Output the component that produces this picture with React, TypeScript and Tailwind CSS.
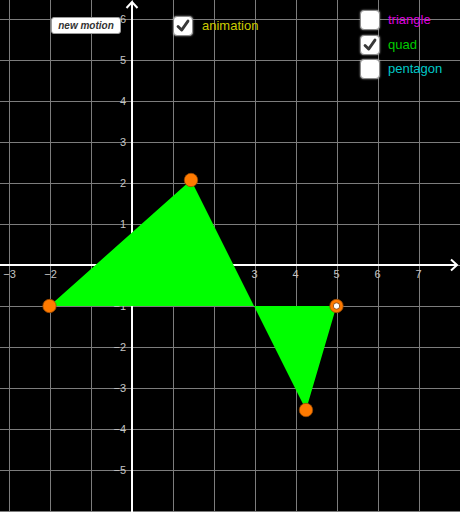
import React from "react";

const OX = 131.5;
const OY = 265;
const U = 41;
const px = (x: number) => OX + x * U;
const py = (y: number) => OY - y * U;

function Check({ checked }: { checked: boolean }) {
  return (
    <div className="w-[20px] h-[20px] shrink-0 rounded-[4px] bg-white border border-[#8a8a8a] shadow-[0_0_2px_rgba(255,255,255,0.6)]">
      {checked && (
        <svg viewBox="0 0 20 20" className="w-full h-full">
          <path d="M4.5 10.5 L8.5 14.5 L15.5 4.5" fill="none" stroke="#383838" strokeWidth="3.2" strokeLinecap="round" strokeLinejoin="round" />
        </svg>
      )}
    </div>
  );
}

function CheckRow({ checked, label, color }: { checked: boolean; label: string; color: string }) {
  return (
    <div className="flex items-center gap-[8px] h-[20px]">
      <Check checked={checked} />
      <span className={`text-[13px] leading-[16px] ${color}`}>{label}</span>
    </div>
  );
}

export default function App() {
  const xs: number[] = [];
  for (let k = -3; k <= 8; k++) xs.push(px(k));
  const ys: number[] = [];
  for (let k = -6; k <= 6; k++) ys.push(py(k));

  const xLabels = [-3, -2, -1, 1, 2, 3, 4, 5, 6, 7];
  const yLabels = [6, 5, 4, 3, 2, 1, -1, -2, -3, -4, -5];
  const fmt = (n: number) => (n < 0 ? `\u2212${-n}` : `${n}`);

  const A = [49.5, 306];
  const B = [191, 180];
  const C = [306, 410];
  const D = [336.5, 306];

  return (
    <div className="relative w-[460px] h-[512px] bg-black overflow-hidden" style={{ fontFamily: '"Liberation Sans", Arial, sans-serif' }}>
      <svg width="460" height="512" className="absolute left-0 top-0">
        {xs.map((x, i) => (
          <line key={"gx" + i} x1={Math.round(x) + 0.5} y1={0} x2={Math.round(x) + 0.5} y2={512} stroke="#7c7c7c" strokeWidth="1" />
        ))}
        {ys.map((y, i) => (
          <line key={"gy" + i} x1={0} y1={y + 0.5} x2={460} y2={y + 0.5} stroke="#7c7c7c" strokeWidth="1" />
        ))}
        <line x1={0} y1={265} x2={457} y2={265} stroke="#fff" strokeWidth="2" />
        <line x1={132} y1={512} x2={132} y2={2} stroke="#fff" strokeWidth="2" />
        <path d="M451 259.5 L457 265 L451 270.5" fill="none" stroke="#fff" strokeWidth="2" />
        <path d="M126.5 8 L132 2 L137.5 8" fill="none" stroke="#fff" strokeWidth="2" />
        {xLabels.map((n) => (
          <text key={"xl" + n} x={px(n) + (n < 0 ? 1 : 0)} y={278} fill="#c4c4c4" fontSize="11" textAnchor="middle" fontFamily='"Liberation Sans", Arial, sans-serif'>
            {fmt(n)}
          </text>
        ))}
        {yLabels.map((n) => (
          <text key={"yl" + n} x={126} y={py(n) + 4} fill="#c4c4c4" fontSize="11" textAnchor="end" fontFamily='"Liberation Sans", Arial, sans-serif'>
            {fmt(n)}
          </text>
        ))}
        <polygon points={`${A[0]},${A[1]} ${B[0]},${B[1]} ${C[0]},${C[1]} ${D[0]},${D[1]}`} fill="#00ff00" />
        {[A, B, C].map((p, i) => (
          <circle key={"p" + i} cx={p[0]} cy={p[1]} r={6.7} fill="#ff7a00" stroke="#9a4a00" strokeWidth="0.8" />
        ))}
        <circle cx={D[0]} cy={D[1]} r={6.7} fill="#ff7a00" stroke="#9a4a00" strokeWidth="0.8" />
        <circle cx={D[0]} cy={D[1]} r={3.2} fill="#ffffff" stroke="#7a3a00" strokeWidth="0.8" />
      </svg>

      <div className="absolute left-[51px] top-[16px] flex items-start gap-[52px]">
        <button className="mt-[1px] w-[70px] h-[17px] bg-white border border-[#9a9a9a] rounded-[3px] flex items-center justify-center text-[10px] font-bold italic text-[#333] leading-none">
          new motion
        </button>
        <div className="flex items-center gap-[9px] h-[20px]">
          <Check checked />
          <span className="text-[13px] leading-[16px] text-[#cccc00]">animation</span>
        </div>
      </div>

      <div className="absolute left-[360px] top-[10px] flex flex-col gap-[4.5px]">
        <CheckRow checked={false} label="triangle" color="text-[#dd00dd]" />
        <CheckRow checked label="quad" color="text-[#00cc00]" />
        <CheckRow checked={false} label="pentagon" color="text-[#00c8c8]" />
      </div>
    </div>
  );
}
